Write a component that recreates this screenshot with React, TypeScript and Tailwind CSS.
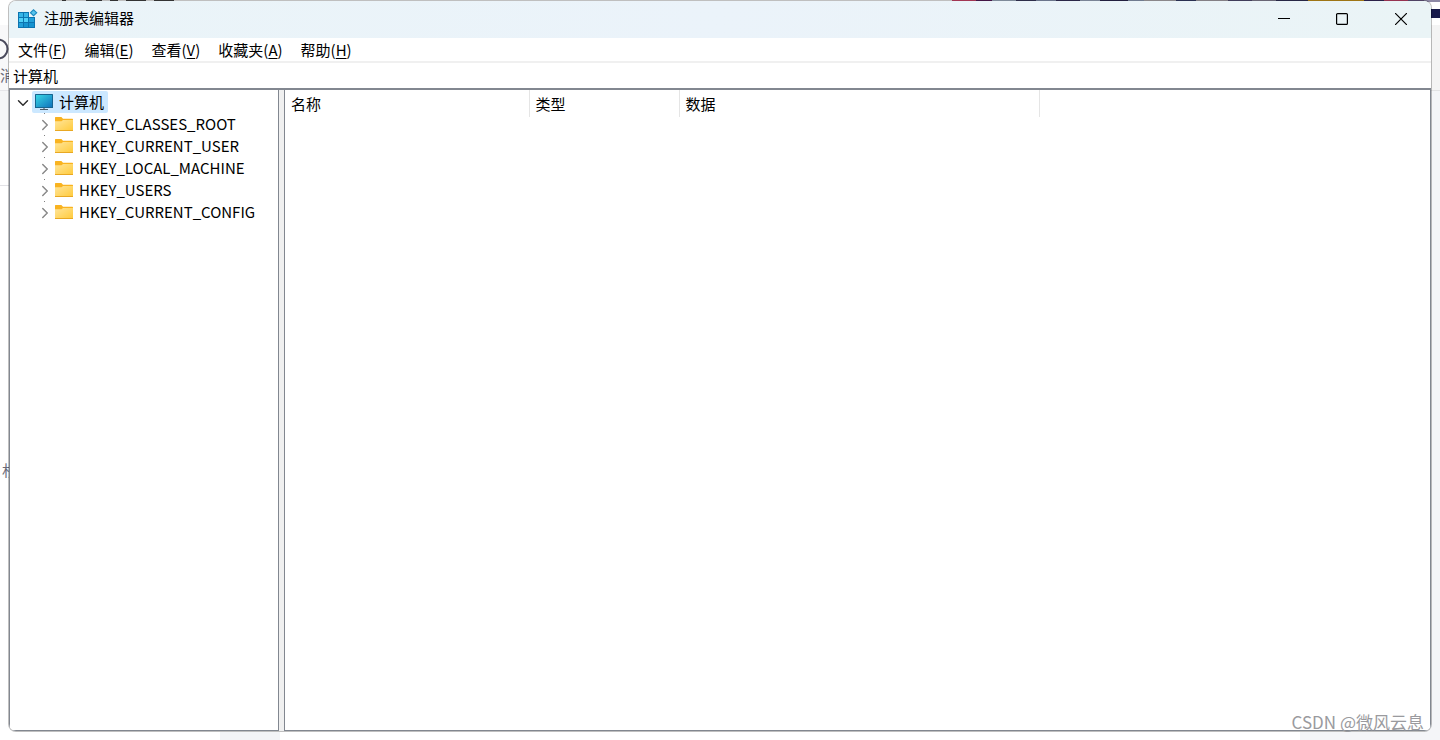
import { ChevronDown, ChevronRight } from 'lucide-react';

interface MenuItem {
  label: string;
  accessKey: string;
}

interface Column {
  name: string;
  width: string;
}

const menuItems: MenuItem[] = [
  { label: '文件', accessKey: 'F' },
  { label: '编辑', accessKey: 'E' },
  { label: '查看', accessKey: 'V' },
  { label: '收藏夹', accessKey: 'A' },
  { label: '帮助', accessKey: 'H' },
];

const hives = [
  'HKEY_CLASSES_ROOT',
  'HKEY_CURRENT_USER',
  'HKEY_LOCAL_MACHINE',
  'HKEY_USERS',
  'HKEY_CURRENT_CONFIG',
];

const columns: Column[] = [
  { name: '名称', width: 'w-[244px]' },
  { name: '类型', width: 'w-[150px]' },
  { name: '数据', width: 'w-[360px]' },
];

// Colour bands of the banner photo that shows above the window
const bannerBands = [
  'w-6 bg-[#d8486f]',
  'w-4 bg-[#5a1d5c]',
  'w-6 bg-[#a9b8cc]',
  'w-5 bg-[#3c3c62]',
  'w-5 bg-[#8f9cba]',
  'w-6 bg-[#3a3560]',
  'w-5 bg-[#a3b0c8]',
  'w-7 bg-[#2e2a55]',
  'w-4 bg-[#96a5bf]',
  'w-8 bg-[#b9b4b8]',
  'w-5 bg-[#38406c]',
  'w-8 bg-[#b0abb2]',
  'w-6 bg-[#565278]',
  'w-6 bg-[#8c889c]',
  'w-8 bg-[#35345c]',
  'w-14 bg-[#d39c1c]',
  'w-5 bg-[#3a2c60]',
  'w-6 bg-[#c9446c]',
  'w-4 bg-[#6b5a86]',
];

function RegeditIcon() {
  return (
    <svg width="20" height="20" viewBox="0 0 20 20" aria-hidden="true">
      <path d="M0 3h11v5h6v11H0z" fill="#0c74b0" />
      <path d="M1 4h4v4H1zM6 4h4v4H6z" fill="#35b4e6" />
      <path d="M1 9h4v4H1zM6 9h4v4H6z" fill="#4fd0f7" />
      <path d="M11 9h5v4h-5zM1 14h4v4H1z" fill="#22a0da" />
      <path d="M6 14h4v4H6zM11 14h5v4h-5z" fill="#1593d0" />
      <path d="M15.5 0 19.5 3.8 15.5 7.6 11.7 3.8z" fill="#1787be" />
      <path d="M15.5 1.5 18 3.8 15.5 6.1 13.2 3.8z" fill="#58c3ec" />
    </svg>
  );
}

function ComputerIcon() {
  return (
    <svg width="18" height="17" viewBox="0 0 18 17" aria-hidden="true">
      <defs>
        <linearGradient id="screen" x1="0" y1="0" x2="1" y2="1">
          <stop offset="0" stopColor="#38d6e4" />
          <stop offset="1" stopColor="#0f74bd" />
        </linearGradient>
      </defs>
      <rect width="18" height="14" rx="0.5" fill="#17648f" />
      <rect x="1" y="1" width="16" height="12" fill="url(#screen)" />
      <path d="M8 14h2v1H8z" fill="#8a97a1" />
      <path d="M5 15h8v1H5z" fill="#4d5a64" />
    </svg>
  );
}

function FolderIcon() {
  return (
    <svg width="18" height="15" viewBox="0 0 18 15" aria-hidden="true">
      <defs>
        <linearGradient id="folder" x1="0" y1="0" x2="1" y2="1">
          <stop offset="0" stopColor="#ffe59a" />
          <stop offset="1" stopColor="#ffca3a" />
        </linearGradient>
      </defs>
      <path d="M0 .6Q0 0 .6 0H6.4L8 1.8H17.4Q18 1.8 18 2.4V8H0z" fill="#f9b320" />
      <path d="M0 4.2H6.5L8 3H18V13.4Q18 14 17.4 14H.6Q0 14 0 13.4z" fill="url(#folder)" />
      <path d="M0 13h18v.5q0 .5-.6.5H.6Q0 14 0 13.5z" fill="#e8a823" />
    </svg>
  );
}

// Slivers of the browser page that stay visible around the window
function Backdrop() {
  return (
    <div className="absolute inset-0 flex flex-col bg-white" aria-hidden="true">
      <div className="flex min-h-0 flex-1 justify-between">
        <div className="flex w-6 flex-col text-[15px] text-[#6b6b78]">
          <div className="h-[25px]" />
          <div className="h-[66px] border-b border-[#e6e6e9] bg-[#f8f8f9]">
            <svg width="9" height="40" viewBox="0 0 9 40">
              <circle cx="-2" cy="24" r="9.5" fill="none" stroke="#4a4a5c" strokeWidth="2" />
            </svg>
            <div className="whitespace-nowrap">消</div>
          </div>
          <div className="h-[39px] bg-[#f5f6f7]" />
          <div className="h-14 border-b border-[#e2e2e6]" />
          <div className="mt-[274px] ml-[2px] whitespace-nowrap">杉</div>
        </div>
        <div className="flex flex-1 items-start">
          <div className="ml-[38px] h-px w-1 bg-[#444]" />
          <div className="ml-5 h-px w-4 bg-[#444]" />
          <div className="ml-2 h-px w-2 bg-[#444]" />
          <div className="ml-2 h-px w-5 bg-[#444]" />
          <div className="ml-2 h-px w-5 bg-[#444]" />
        </div>
        <div className="flex h-px">
          {bannerBands.map((band, index) => (
            <div key={index} className={band} />
          ))}
        </div>
        <div className="flex w-4 flex-col bg-[#f4f5f8]">
          <div className="h-[2px] bg-[#8d88a5]" />
          <div className="h-[7px] bg-white" />
          <div className="h-[9px] bg-[#171a4a]" />
          <div className="h-[7px] bg-white" />
          <div className="h-[66px] border-b border-[#e2e2e4] bg-[#f4f4f4]" />
        </div>
      </div>
      <div className="flex h-2">
        <div className="ml-[220px] w-[60px] bg-[#f3f4f7]" />
        <div className="ml-auto w-[140px] bg-[#f4f5f8]" />
      </div>
    </div>
  );
}

function TitleBar() {
  return (
    <header className="flex h-[37px] items-center bg-gradient-to-r from-[#eaf4f8] via-[#ebf3fa] to-[#eaf4f6] pb-[2px] pl-[9px]">
      <RegeditIcon />
      <h1 className="ml-[6px] flex-1 pb-[2px]">注册表编辑器</h1>
      <button aria-label="最小化" className="flex h-full w-[58px] items-center justify-center">
        <svg width="12" height="12" viewBox="0 0 12 12">
          <path d="M0 5.5h12" stroke="#000" />
        </svg>
      </button>
      <button aria-label="最大化" className="flex h-full w-[58px] items-center justify-center">
        <svg width="12" height="12" viewBox="0 0 12 12" fill="none" stroke="#000">
          <rect x="0.6" y="0.6" width="10.8" height="10.8" rx="1" strokeWidth="1.2" />
        </svg>
      </button>
      <button aria-label="关闭" className="flex h-full w-[60px] items-center justify-center">
        <svg width="12" height="12" viewBox="0 0 12 12" stroke="#000" strokeWidth="1.2">
          <path d="M0 0 12 12M12 0 0 12" />
        </svg>
      </button>
    </header>
  );
}

function MenuBar() {
  return (
    <nav className="flex h-[25px] items-center border-b-2 border-[#f0f0f0]">
      {menuItems.map((item) => (
        <button key={item.accessKey} className="px-[9px]">
          {item.label}(<span className="underline underline-offset-2">{item.accessKey}</span>)
        </button>
      ))}
    </nav>
  );
}

function KeyTree() {
  return (
    <aside className="w-[270px] border-x border-b border-[#828790] pt-px">
      <div className="flex h-[22px] items-center pl-1">
        <button aria-label="折叠" className="pt-[2px]">
          <ChevronDown size={18} strokeWidth={2} className="text-[#303030]" />
        </button>
        <button className="flex h-[22px] items-center gap-[6px] rounded-xs bg-[#cce8ff] pr-1 pl-[3px]">
          <ComputerIcon />
          计算机
        </button>
      </div>
      <ul>
        {hives.map((hive) => (
          <li key={hive} className="flex h-[22px] items-center pl-7">
            <button aria-label={`展开 ${hive}`} className="flex h-full w-[13px] flex-col items-center">
              <span className="h-px w-px bg-[#808080]" />
              <ChevronRight size={18} strokeWidth={2} className="mt-[2px] shrink-0 text-[#8a8a8a]" />
            </button>
            <button className="ml-1 flex items-center gap-[6px]">
              <FolderIcon />
              {hive}
            </button>
          </li>
        ))}
      </ul>
    </aside>
  );
}

function ValueList() {
  return (
    <main className="min-w-0 flex-1 overflow-hidden border-x border-b border-[#828790]">
      <table className="table-fixed">
        <thead>
          <tr className="h-[27px]">
            {columns.map((column) => (
              <th key={column.name} className={`${column.width} border-r border-[#e5e5e5] px-[6px] text-left font-normal`}>
                {column.name}
              </th>
            ))}
          </tr>
        </thead>
      </table>
    </main>
  );
}

export default function App() {
  return (
    <div className="relative flex h-screen overflow-hidden font-['Noto_Sans_CJK_SC',sans-serif] text-[15px] leading-5 text-black">
      <Backdrop />
      <div className="relative mx-2 mb-2 flex flex-1 flex-col overflow-hidden rounded-lg border border-black/25 bg-white bg-clip-padding">
        <TitleBar />
        <MenuBar />
        <input aria-label="地址" defaultValue="计算机" className="h-[25px] px-1 outline-none" />
        <div className="flex min-h-0 flex-1 border-t-2 border-[#828790]">
          <KeyTree />
          <div className="w-[5px] bg-[#f0f0f0]" />
          <ValueList />
        </div>
      </div>
      <span className="absolute right-4 bottom-2 text-[17px] leading-5 text-[#9a9a9e]">CSDN @微风云息</span>
    </div>
  );
}
